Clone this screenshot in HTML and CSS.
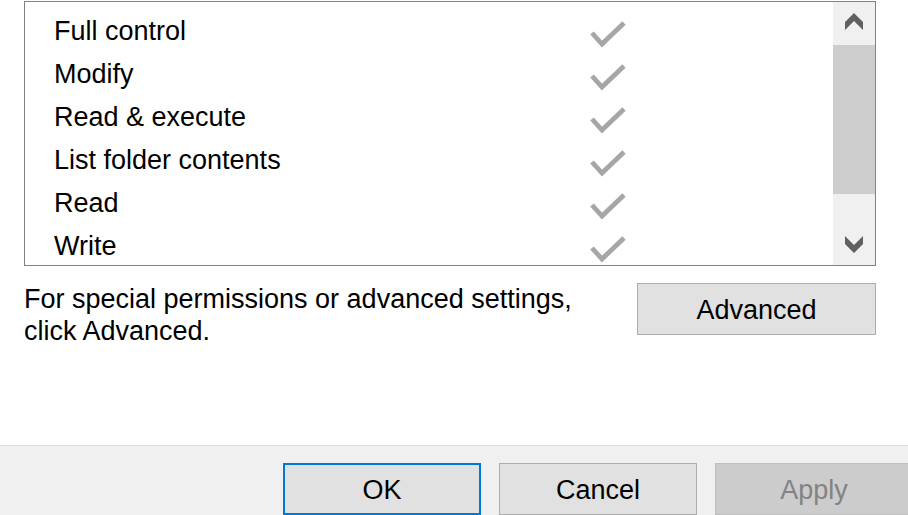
FILE: index.html
```html
<!DOCTYPE html>
<html lang="en">
<head>
<meta charset="utf-8">
<title>Permissions</title>
<link rel="stylesheet" href="styles.css">
</head>
<body>
<div class="dialog">
  <main class="content">
    <div class="perm-list">
      <div class="rows">
        <div class="row"><span class="name">Full control</span><svg class="check" viewBox="0 0 38 28"><polyline points="3,13 13,24 35,3"/></svg></div>
        <div class="row"><span class="name">Modify</span><svg class="check" viewBox="0 0 38 28"><polyline points="3,13 13,24 35,3"/></svg></div>
        <div class="row"><span class="name">Read &amp; execute</span><svg class="check" viewBox="0 0 38 28"><polyline points="3,13 13,24 35,3"/></svg></div>
        <div class="row"><span class="name">List folder contents</span><svg class="check" viewBox="0 0 38 28"><polyline points="3,13 13,24 35,3"/></svg></div>
        <div class="row"><span class="name">Read</span><svg class="check" viewBox="0 0 38 28"><polyline points="3,13 13,24 35,3"/></svg></div>
        <div class="row"><span class="name">Write</span><svg class="check" viewBox="0 0 38 28"><polyline points="3,13 13,24 35,3"/></svg></div>
      </div>
      <div class="scrollbar">
        <div class="sb-btn"><svg class="arrow" viewBox="0 0 18 17"><polygon points="0,9 9,0 18,9 18,17 9,8 0,17"/></svg></div>
        <div class="sb-thumb"></div>
        <div class="sb-rest"><svg class="arrow" viewBox="0 0 18 17"><polygon points="0,0 9,9 18,0 18,8 9,17 0,8"/></svg></div>
      </div>
    </div>
    <div class="info">
      <p class="info-text">For special permissions or advanced settings, click Advanced.</p>
      <button class="btn advanced" type="button">Advanced</button>
    </div>
  </main>
  <footer class="footer">
    <button class="btn default" type="button">OK</button>
    <button class="btn" type="button">Cancel</button>
    <button class="btn disabled" type="button">Apply</button>
  </footer>
</div>
</body>
</html>
```

FILE: styles.css
```css
html, body {
  margin: 0;
  padding: 0;
  background: #ffffff;
}

body {
  font-family: "Liberation Sans", Arial, sans-serif;
  font-size: 27px;
  color: #000000;
}

.dialog {
  width: 908px;
  height: 515px;
  display: flex;
  flex-direction: column;
  overflow: hidden;
}

.content {
  flex: 1;
  padding: 1px 32px 0 24px;
}

.perm-list {
  display: flex;
  height: 263px;
  border: 1px solid #828282;
  background: #ffffff;
  overflow: hidden;
}

.rows {
  flex: 1;
  padding: 8px 0 0 29px;
  overflow: hidden;
}

.row {
  display: flex;
  align-items: center;
  height: 43px;
  line-height: 43px;
}

.name {
  width: 535px;
  white-space: nowrap;
}

.check {
  width: 38px;
  height: 28px;
  margin-top: 5px;
  flex: none;
}

.check polyline {
  fill: none;
  stroke: #a6a6a6;
  stroke-width: 4.8;
  stroke-linejoin: miter;
}

.scrollbar {
  width: 42px;
  display: flex;
  flex-direction: column;
  background: #f0f0f0;
}

.sb-btn {
  height: 43px;
  display: flex;
  justify-content: center;
  padding-top: 11px;
  box-sizing: border-box;
}

.sb-thumb {
  height: 149px;
  background: #cdcdcd;
}

.sb-rest {
  flex: 1;
  display: flex;
  justify-content: center;
  align-items: flex-end;
  padding-bottom: 12px;
}

.arrow {
  width: 18px;
  height: 17px;
}

.arrow polygon {
  fill: #606060;
}

.info {
  display: flex;
  justify-content: space-between;
  align-items: flex-start;
  margin-top: 16px;
}

.info-text {
  margin: 0;
  padding-top: 1px;
  width: 590px;
  line-height: 32px;
}

.btn {
  font-family: "Liberation Sans", Arial, sans-serif;
  font-size: 27px;
  color: #000000;
  background: #e1e1e1;
  border: 1px solid #adadad;
  width: 198px;
  height: 52px;
  padding: 3px 0 0;
  margin: 0;
  box-sizing: border-box;
  flex: none;
}

.advanced {
  width: 239px;
  margin-top: 1px;
}

.footer {
  height: 70px;
  box-sizing: border-box;
  border-top: 1px solid #dfdfdf;
  background: #f0f0f0;
  display: flex;
  gap: 18px;
  padding: 17px 0 0 283px;
}

.default {
  border: 2px solid #0078d7;
}

.disabled {
  background: #cccccc;
  border-color: #bfbfbf;
  color: #838383;
}
```
